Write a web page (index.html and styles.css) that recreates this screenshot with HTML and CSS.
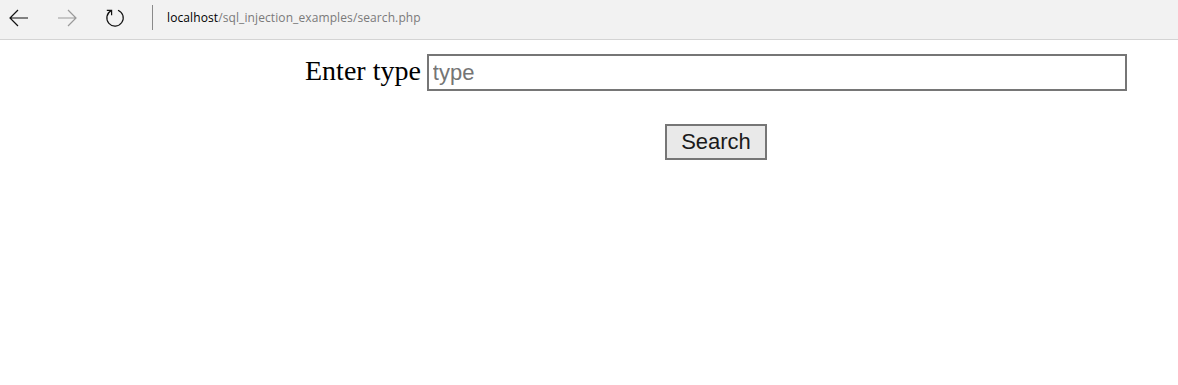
FILE: index.html
```html
<!DOCTYPE html>
<html>
<head>
<meta charset="utf-8">
<title>search</title>
<link rel="stylesheet" href="styles.css">
</head>
<body>
<div class="chrome">
  <div class="nav">
    <span class="btn back">
      <svg width="22" height="22" viewBox="0 0 22 22"><path d="M20 11H2M10 3L2 11l8 8" fill="none" stroke="#111" stroke-width="1.2"/></svg>
    </span>
    <span class="btn fwd">
      <svg width="22" height="22" viewBox="0 0 22 22"><path d="M2 11h18M12 3l8 8-8 8" fill="none" stroke="#9a9a9a" stroke-width="1.2"/></svg>
    </span>
    <span class="btn reload">
      <svg width="22" height="22" viewBox="0 0 22 22"><path d="M7.2 3.6A8.2 8.2 0 1 0 14 3.2" fill="none" stroke="#111" stroke-width="1.2"/><path d="M7.6 8.2V3.4H2.8" fill="none" stroke="#111" stroke-width="1.2"/></svg>
    </span>
  </div>
  <div class="sep"></div>
  <div class="url"><span class="host">localhost</span><span class="path">/sql_injection_examples/search.php</span></div>
</div>
<main class="page">
  <form class="search-form">
    <div class="row">
      <label class="label" for="type">Enter type</label>
      <input class="field" id="type" type="text" placeholder="type">
    </div>
    <div class="actions">
      <button class="submit" type="button">Search</button>
    </div>
  </form>
</main>
</body>
</html>
```

FILE: styles.css
```css
html, body {
  margin: 0;
  padding: 0;
  background: #fff;
}
body {
  width: 1178px;
  height: 385px;
  overflow: hidden;
}
.chrome {
  height: 39px;
  background: #f2f2f2;
  border-bottom: 1px solid #d4d4d4;
  display: flex;
  align-items: center;
}
.nav {
  display: flex;
  align-items: center;
  padding-left: 8px;
  gap: 26px;
  margin-top: -4px;
}
.btn {
  display: flex;
  width: 22px;
  height: 22px;
}
.sep {
  width: 1px;
  height: 25px;
  background: #8a8a8a;
  margin-left: 26px;
  margin-top: -4px;
}
.url {
  margin-left: 14px;
  margin-top: -5px;
  font-family: "Open Sans", "Noto Sans", sans-serif;
  font-size: 12px;
  letter-spacing: 0.1px;
}
.host { color: #000; }
.path { color: #7a7a7a; }

.page {
  padding: 14px 0 0 305px;
}
.search-form {
  width: 822px;
  margin: 0;
}
.row {
  display: flex;
  align-items: baseline;
}
.label {
  font-family: "Liberation Serif", "Times New Roman", serif;
  font-size: 28px;
  color: #000;
  margin-right: 6px;
}
.field {
  box-sizing: border-box;
  width: 700px;
  height: 37px;
  border: 2px solid #767676;
  padding: 0 4px;
  font-family: "Liberation Sans", Arial, sans-serif;
  font-size: 22px;
  color: #000;
  outline: none;
}
.field::placeholder {
  color: #757575;
}
.actions {
  display: flex;
  justify-content: center;
  margin-top: 33px;
}
.submit {
  box-sizing: border-box;
  width: 102px;
  height: 36px;
  border: 2px solid #767676;
  background: #e9e9e9;
  font-family: "Liberation Sans", Arial, sans-serif;
  font-size: 22px;
  color: #1a1a1a;
  padding: 0;
  border-radius: 0;
}
```
